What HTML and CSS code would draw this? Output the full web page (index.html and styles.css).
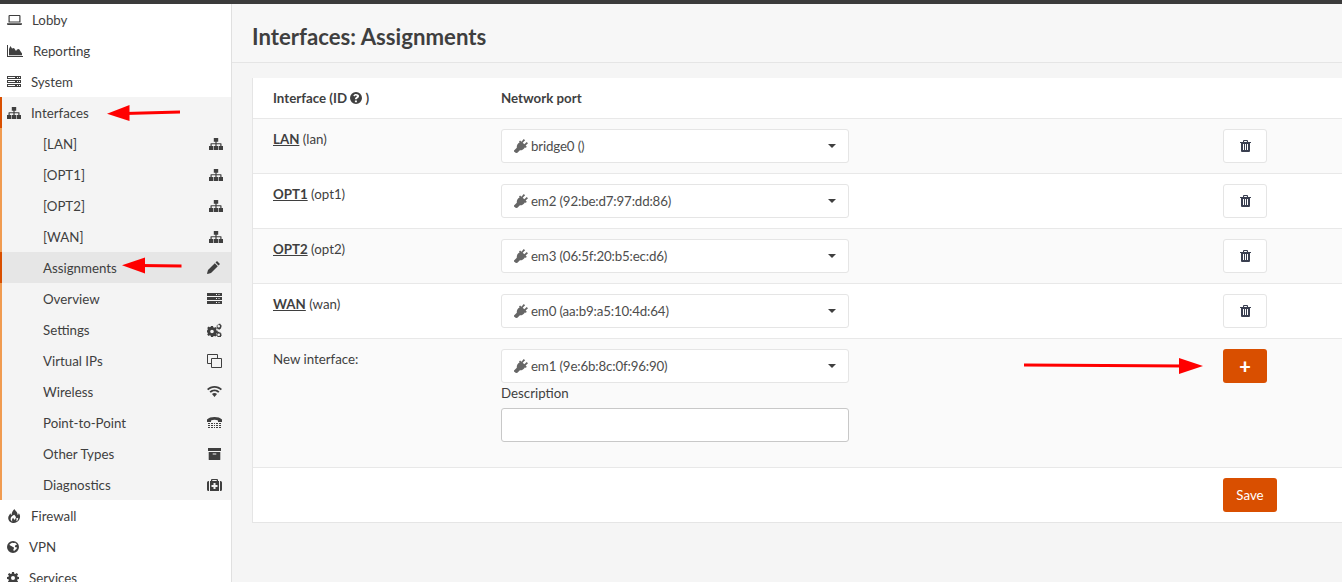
FILE: index.html
```html
<!DOCTYPE html>
<html lang="en">
<head>
<meta charset="utf-8">
<title>Interfaces: Assignments</title>
<link rel="stylesheet" href="styles.css">
</head>
<body>
<svg class="sprite" xmlns="http://www.w3.org/2000/svg">
  <symbol id="i-laptop" viewBox="0 0 15 10"><path d="M2.500 0h10a1 1 0 0 1 1 1v6.500h-12V1a1 1 0 0 1 1-1zm.2 1v5.400h9.600V1zM0 8.300h15v.7a1 1 0 0 1-1 1H1a1 1 0 0 1-1-1z"/></symbol>
  <symbol id="i-area" viewBox="0 0 16 12"><path d="M0 0h1v11h15v1H0zM2 10.300V4L3.500 1 5 3.500 7 3l2 3 1-1.500 2-.5 3 4.500v1.800z"/></symbol>
  <symbol id="i-server" viewBox="0 0 14 11"><path fill-rule="evenodd" d="M0 0h14v3H0zm1 1v1h7V1zm9 0v1h1V1zm2 0v1h1V1zM0 4h14v3H0zm1 1v1h7V5zm9 0v1h1V5zm2 0v1h1V5zM0 8h14v3H0zm1 1v1h7V9zm9 0v1h1V9zm2 0v1h1V9z"/></symbol>
  <symbol id="i-map" viewBox="0 0 14 12"><path d="M4.800 0h4.400v3.800H7.600V5.200H12a.5.500 0 0 1 .5.500v2.300H14V12H9.800V8H11.300V6.300H7.600V8H9.200V12H4.800V8H6.400V6.300H2.700V8H4.200V12H0V8H1.500V5.700a.5.500 0 0 1 .5-.5h4.400V3.800H4.800z"/></symbol>
  <symbol id="i-fire" viewBox="0 0 14 14"><path fill-rule="evenodd" d="M7.500 0c.5 2 3.600 3 2.900 5.800 1-.2 1.400-1 1.300-1.900 1.300 1.600 1.700 3.500 1.100 5.400C12 12 9.800 14 7 14c-3 0-5.800-2-5.800-5 0-2 1.500-3.300 2.200-4.700.3 1 .6 1.500 1.300 1.800C4.500 3.700 5.800 1.500 7.500 0zM7.200 5.800C5.400 6.800 3.400 8.300 3.600 10.200c.2 1 .9 1.900 1.800 2.300-.7-1.300-.4-2.700.8-3.800.6 1 .6 1.700 1.300 2 1.100-.3 1.200-1.300 1-2.200 1 .8 1.400 2 .8 3.800 1.200-.7 2-2 1.800-3.600-.5.500-1.200.7-2 .3C8.900 7.800 8.200 6.800 7.200 5.800z"/></symbol>
  <symbol id="i-globe" viewBox="0 0 12 12"><path fill-rule="evenodd" d="M6 0a6 6 0 1 1 0 12A6 6 0 0 1 6 0zM5.500 1.500C4.500 2.500 3 2.500 2.500 3.500c.2 1.200 1.500 1.200 2.300 1.800.8.700 2 .6 2.200 1.700.1.900-.9 1.300-.6 2.300.2.700.9.700 1.400.2.900-.9 1.700-1.500 2.400-2.700-.6-.5-1.500-.3-2-.8-.5-.6-.3-1.300.3-1.700.5-.3 1-.1 1.500-.3-.4-1-1-1.700-1.900-2.300-.8.300-1.500.6-2.600.3z"/></symbol>
  <symbol id="i-cog" viewBox="0 0 12 12"><path fill-rule="evenodd" d="M5 0h2l.3 1.700 1 .4L9.800 1l1.300 1.400-1 1.400.4 1L12 5v2l-1.500.3-.4 1 1 1.400L9.800 11l-1.500-1-1 .4L7 12H5l-.3-1.600-1-.4-1.500 1L.9 9.700l1-1.400-.4-1L0 7V5l1.500-.2.4-1-1-1.400L2.200 1l1.500 1.100 1-.4zM6 4a2 2 0 1 0 0 4 2 2 0 0 0 0-4z"/></symbol>
  <symbol id="i-pencil" viewBox="0 0 13 13"><path d="M10 0l3 3-1.500 1.500-3-3zM7.800 2.200l3 3L4 12 .6 13 0 12.400 1 9z"/></symbol>
  <symbol id="i-tasks" viewBox="0 0 15 11"><path fill-rule="evenodd" d="M0 0h15v3H0zm9 1v1h1V1zm2.500 0v1h1V1zM0 4h15v3H0zm9 1v1h1V5zm2.500 0v1h1V5zM0 8h15v3H0zm9 1v1h1V9zm2.500 0v1h1V9z"/></symbol>
  <symbol id="i-cogs" viewBox="0 0 15 14"><path fill-rule="evenodd" d="M4 3h2l.3 1.300.9.400 1.200-.7 1.400 1.400-.7 1.200.4.900 1.300.3v2l-1.300.3-.4.900.7 1.200-1.400 1.400-1.200-.7-.9.400L6 14H4l-.3-1.300-.9-.4-1.200.7L.2 11.600l.7-1.200-.4-.9L0 9.200v-1.800l.5-.4.400-.9-.7-1.200L1.600 3.500l1.200.7.900-.4zM5 6.700a1.800 1.800 0 1 0 0 3.600 1.800 1.800 0 0 0 0-3.600zM12 0l.4.900 1-.1.300 1 .9.400-.3 1 .5.800-.8.600v1l-1 .3-.6.800-.9-.4-1-.1-.3-1-.8-.6.400-.9-.3-1 .9-.4.400-.9 1 .2zm-.3 2a1.300 1.300 0 1 0 0 2.600 1.300 1.300 0 0 0 0-2.600zM12 8.500l.4.900 1-.1.300 1 .9.400-.3 1 .5.800-.8.600v1h-1l-.6.400-.9-.4-1-.1-.3-1-.8-.6.400-.9-.3-1 .9-.4.400-.9zm-.3 2a1.300 1.300 0 1 0 0 2.600 1.300 1.300 0 0 0 0-2.600z"/></symbol>
  <symbol id="i-clone" viewBox="0 0 15 14"><path fill-rule="evenodd" d="M1 0h9a1 1 0 0 1 1 1v3h3a1 1 0 0 1 1 1v8a1 1 0 0 1-1 1H5a1 1 0 0 1-1-1v-3H1a1 1 0 0 1-1-1V1a1 1 0 0 1 1-1zm0 1v8h3V5a1 1 0 0 1 1-1h5V1zm4 4v8h9V5z"/></symbol>
  <symbol id="i-wifi" viewBox="0 0 15 11"><path d="M7.500 0c2.900 0 5.500 1.100 7.500 3l-1.300 1.300C12 2.700 9.900 1.800 7.500 1.800S3 2.700 1.300 4.300L0 3C2 1.100 4.600 0 7.500 0zm0 3.500c1.900 0 3.700.7 5 2L11.200 6.800C10.200 5.900 8.900 5.300 7.500 5.300S4.800 5.900 3.800 6.800L2.500 5.500c1.300-1.300 3.100-2 5-2zM7.500 7c1 0 1.800.4 2.500 1l-2.500 3L5 8c.7-.6 1.500-1 2.500-1z"/></symbol>
  <symbol id="i-tty" viewBox="0 0 15 11"><path fill-rule="evenodd" d="M7.500 0c3 0 6 .8 7.500 2.500V5h-4V3.400C10 3 8.800 2.800 7.500 2.800S5 3 4 3.400V5H0V2.500C1.500.8 4.500 0 7.500 0zM1 6h2v1H1zm3 0h2v1H4zm3 0h1v1H7zm2 0h2v1H9zm3 0h2v1h-2zM1 8h2v1H1zm3 0h2v1H4zm3 0h1v1H7zm2 0h2v1H9zm3 0h2v1h-2zM1 10h2v1H1zm3 0h2v1H4zm3 0h1v1H7zm2 0h2v1H9zm3 0h2v1h-2z"/></symbol>
  <symbol id="i-archive" viewBox="0 0 13 12"><path fill-rule="evenodd" d="M0 0h13v3H0zM.7 4h11.600v7.500a.5.500 0 0 1-.5.500H1.200a.5.500 0 0 1-.5-.5zm4 1.500v1h3.600v-1z"/></symbol>
  <symbol id="i-medkit" viewBox="0 0 15 12"><path fill-rule="evenodd" d="M5 0h5a1 1 0 0 1 1 1v1h1v10H3V2h1V1a1 1 0 0 1 1-1zm.300 1v1h4.400V1zM6.500 4v2h-2v2h2v2h2V8h2V6h-2V4zM0 3.500A1.500 1.500 0 0 1 1.500 2H2v10h-.5A1.500 1.500 0 0 1 0 10.500zM13 2h.5A1.500 1.500 0 0 1 15 3.500v7a1.500 1.500 0 0 1-1.500 1.500H13z"/></symbol>
  <symbol id="i-plug" viewBox="0 0 14 14"><path d="M9.800 0l1.300 1.300-2.400 2.400 1.600 1.600 2.400-2.400L14 4.200l-2.400 2.400 1.200 1.200-1.100 1.100-.7-.7c-1 1.900-3 3.200-5.100 3.100L3.400 13.700 2.600 14l-1-.3L0 12.400v-.8l2.800-2.900C2.500 6.500 3.700 4.300 5.700 3.300l-.7-.7 1.100-1.100 1.300 1.200z"/></symbol>
  <symbol id="i-trash" viewBox="0 0 11 12"><path fill-rule="evenodd" d="M4 0h3a1 1 0 0 1 1 1v1h3v1h-1v8a1 1 0 0 1-1 1H2a1 1 0 0 1-1-1V3H0V2h3V1a1 1 0 0 1 1-1zm.100 1v1h2.800V1zM3 4v6h1V4zm2 0v6h1V4zm2 0v6h1V4z"/></symbol>
  <symbol id="i-help" viewBox="0 0 12 12"><path fill-rule="evenodd" d="M6 0a6 6 0 1 1 0 12A6 6 0 0 1 6 0zM6 2C4.700 2 3.800 2.600 3.300 3.500l1.200.9c.3-.5.800-.9 1.400-.9.600 0 1 .3 1 .7 0 .9-2 1-2 2.800v.3h2c0-1.100 2.200-1.300 2.200-3.300C9.100 2.900 7.500 2 6 2zM4.900 8.500v1.700h2V8.500z"/></symbol>
</svg>

<div class="topbar"></div>
<div class="page">
  <nav class="sidebar">
    <a class="nav-top"><svg class="ic" width="15" height="10"><use href="#i-laptop"/></svg>Lobby</a>
    <a class="nav-top"><svg class="ic" width="16" height="12"><use href="#i-area"/></svg>Reporting</a>
    <a class="nav-top"><svg class="ic" width="14" height="11"><use href="#i-server"/></svg>System</a>
    <a class="nav-top nav-open"><svg class="ic" width="14" height="12"><use href="#i-map"/></svg>Interfaces</a>
    <a class="nav-sub">[LAN]<svg class="ic" width="14" height="12"><use href="#i-map"/></svg></a>
    <a class="nav-sub">[OPT1]<svg class="ic" width="14" height="12"><use href="#i-map"/></svg></a>
    <a class="nav-sub">[OPT2]<svg class="ic" width="14" height="12"><use href="#i-map"/></svg></a>
    <a class="nav-sub">[WAN]<svg class="ic" width="14" height="12"><use href="#i-map"/></svg></a>
    <a class="nav-sub nav-active">Assignments<svg class="ic ic-inset3" width="13" height="13"><use href="#i-pencil"/></svg></a>
    <a class="nav-sub">Overview<svg class="ic ic-inset1" width="15" height="11"><use href="#i-tasks"/></svg></a>
    <a class="nav-sub">Settings<svg class="ic ic-inset1" width="15" height="14"><use href="#i-cogs"/></svg></a>
    <a class="nav-sub">Virtual IPs<svg class="ic ic-inset1" width="15" height="14"><use href="#i-clone"/></svg></a>
    <a class="nav-sub">Wireless<svg class="ic ic-inset1" width="15" height="11"><use href="#i-wifi"/></svg></a>
    <a class="nav-sub">Point-to-Point<svg class="ic ic-inset1" width="15" height="11"><use href="#i-tty"/></svg></a>
    <a class="nav-sub">Other Types<svg class="ic ic-inset2" width="13" height="12"><use href="#i-archive"/></svg></a>
    <a class="nav-sub">Diagnostics<svg class="ic ic-inset1" width="15" height="12"><use href="#i-medkit"/></svg></a>
    <a class="nav-top"><svg class="ic" width="14" height="14"><use href="#i-fire"/></svg>Firewall</a>
    <a class="nav-top"><svg class="ic" width="12" height="12"><use href="#i-globe"/></svg>VPN</a>
    <a class="nav-top"><svg class="ic" width="12" height="12"><use href="#i-cog"/></svg>Services</a>
  </nav>

  <main class="main">
    <header class="page-head"><h1>Interfaces: Assignments</h1></header>
    <section class="card">
      <div class="row row-head">
        <div class="cell-name"><strong>Interface (ID <svg class="ic-help" width="12" height="12"><use href="#i-help"/></svg> )</strong></div>
        <div class="cell-port"><strong>Network port</strong></div>
      </div>

      <div class="row row-tint">
        <div class="cell-name"><a class="if-link">LAN</a> (lan)</div>
        <div class="cell-port"><button class="select" type="button"><svg class="ic-plug" width="14" height="14"><use href="#i-plug"/></svg>bridge0 ()<span class="caret"></span></button></div>
        <div class="cell-action"><button class="btn-icon" type="button"><svg width="11" height="12"><use href="#i-trash"/></svg></button></div>
      </div>

      <div class="row">
        <div class="cell-name"><a class="if-link">OPT1</a> (opt1)</div>
        <div class="cell-port"><button class="select" type="button"><svg class="ic-plug" width="14" height="14"><use href="#i-plug"/></svg>em2 (92:be:d7:97:dd:86)<span class="caret"></span></button></div>
        <div class="cell-action"><button class="btn-icon" type="button"><svg width="11" height="12"><use href="#i-trash"/></svg></button></div>
      </div>

      <div class="row row-tint">
        <div class="cell-name"><a class="if-link">OPT2</a> (opt2)</div>
        <div class="cell-port"><button class="select" type="button"><svg class="ic-plug" width="14" height="14"><use href="#i-plug"/></svg>em3 (06:5f:20:b5:ec:d6)<span class="caret"></span></button></div>
        <div class="cell-action"><button class="btn-icon" type="button"><svg width="11" height="12"><use href="#i-trash"/></svg></button></div>
      </div>

      <div class="row">
        <div class="cell-name"><a class="if-link">WAN</a> (wan)</div>
        <div class="cell-port"><button class="select" type="button"><svg class="ic-plug" width="14" height="14"><use href="#i-plug"/></svg>em0 (aa:b9:a5:10:4d:64)<span class="caret"></span></button></div>
        <div class="cell-action"><button class="btn-icon" type="button"><svg width="11" height="12"><use href="#i-trash"/></svg></button></div>
      </div>

      <div class="row row-tint row-new">
        <div class="cell-name">New interface:</div>
        <div class="cell-port">
          <button class="select" type="button"><svg class="ic-plug" width="14" height="14"><use href="#i-plug"/></svg>em1 (9e:6b:8c:0f:96:90)<span class="caret"></span></button>
          <label class="desc-label" for="desc">Description</label>
          <input class="desc-input" id="desc" type="text">
        </div>
        <div class="cell-action"><button class="btn-add" type="button">+</button></div>
      </div>

      <div class="row row-save">
        <div class="cell-action"><button class="btn-save" type="button">Save</button></div>
      </div>
    </section>
  </main>
</div>

<svg class="arrows" width="1342" height="582" xmlns="http://www.w3.org/2000/svg">
  <path class="arrow-line" d="M180 112L125 113.500"/>
  <path class="arrow-head" d="M107 113.800L129.500 105V121z"/>
  <path class="arrow-line" d="M181.500 266L140 265.500"/>
  <path class="arrow-head" d="M122 265.300L145 257.500V273.500z"/>
  <path class="arrow-line" d="M1024 365L1185 366"/>
  <path class="arrow-head" d="M1203 366L1179 358V374z"/>
</svg>
</body>
</html>
```

FILE: styles.css
```css
* { box-sizing: border-box; }
html, body { margin: 0; height: 100%; overflow: hidden; }
body {
  font-family: "Lato", "Noto Sans", sans-serif;
  font-size: 13.3px;
  color: #3f3f3f;
  background: #f5f5f5;
  position: relative;
}
.sprite { display: none; }
svg { fill: currentColor; }

.topbar { height: 4px; background: #3b3b3b; }
.page { display: flex; height: 578px; }

.sidebar {
  width: 232px;
  flex: none;
  background: #fff;
  border-right: 1px solid #e0e0e0;
}
.nav-top, .nav-sub {
  display: flex;
  align-items: center;
  height: 31px;
  color: #3f3f3f;
  flex: none;
}
.nav-top { padding-left: 7px; gap: 10px; }
.nav-top.nav-open { background: #f4f4f4; border-left: 2px solid #d94f00; padding-left: 5px; }
.nav-sub {
  justify-content: space-between;
  padding: 0 8px 0 41px;
  background: #f4f4f4;
  border-left: 2px solid #f09b50;
}
.nav-sub.nav-active { background: #e6e6e6; border-left-color: #d94f00; }
.ic { flex: none; }
.ic-inset1 { margin-right: 1px; }
.ic-inset2 { margin-right: 2px; }
.ic-inset3 { margin-right: 3px; }

.main { flex: 1; min-width: 0; }
.page-head {
  height: 59px;
  background: #f7f7f7;
  border-bottom: 1px solid #e5e5e5;
  display: flex;
  align-items: center;
  padding: 6px 0 0 20px;
}
.page-head h1 { margin: 0; font-size: 22.2px; font-weight: 700; color: #3f3f3f; }

.card {
  margin: 15px 0 0 20px;
  background: #fff;
  border-left: 1px solid #e5e5e5;
  border-bottom: 1px solid #e5e5e5;
}
.row {
  display: grid;
  grid-template-columns: 248px 348px 374px 1fr;
  height: 55px;
  padding-top: 10px;
  border-bottom: 1px solid #e8e8e8;
}
.row-tint { background: #fafafa; }
.row-head { height: 41px; padding-top: 12px; }
.row-new { height: 129px; }
.row-save { height: 54px; border-bottom: 0; }
.cell-name { padding: 2px 0 0 20px; }
.row-head .cell-name { padding-top: 0; }
.cell-port { min-width: 0; }
.cell-action { grid-column: 4; }
strong { font-weight: 700; }
.ic-help { vertical-align: -1px; }
.if-link { font-weight: 700; text-decoration: underline; }

.select {
  display: flex;
  align-items: center;
  width: 348px;
  height: 34px;
  padding: 0 12px;
  background: #fff;
  border: 1px solid #e5e5e5;
  border-radius: 3px;
  font: inherit;
  letter-spacing: -0.15px;
  color: #4d4d4d;
}
.ic-plug { color: #666; margin-right: 3px; flex: none; }
.caret {
  margin-left: auto;
  width: 0;
  height: 0;
  border-left: 4px solid transparent;
  border-right: 4px solid transparent;
  border-top: 4px solid #3f3f3f;
}
.desc-label { display: block; margin-top: 2px; height: 23px; line-height: 17px; }
.desc-input {
  display: block;
  width: 348px;
  height: 34px;
  background: #fff;
  border: 1px solid #c8c8c8;
  border-radius: 3px;
}
.btn-icon, .btn-add, .btn-save {
  display: flex;
  align-items: center;
  justify-content: center;
  height: 34px;
  border-radius: 3px;
  padding: 0;
  font: inherit;
}
.btn-icon, .btn-add { width: 44px; }
.btn-icon { background: #fff; border: 1px solid #e5e5e5; color: #3a3f50; }
.btn-add { background: #d94f00; border: 0; color: #fff; font-weight: 900; font-size: 20px; }
.btn-save { width: 54px; background: #d94f00; border: 0; color: #fff; }

.arrows { position: absolute; left: 0; top: 0; pointer-events: none; }
.arrow-line { fill: none; stroke: #f00; stroke-width: 3; }
.arrow-head { fill: #f00; }
```
